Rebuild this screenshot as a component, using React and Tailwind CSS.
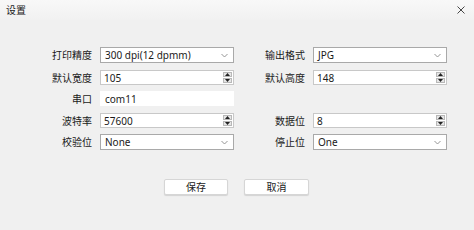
import React from "react";

// Settings dialog (打印设置)

function Chevron() {
  return (
    <svg width="7" height="5" viewBox="0 0 7 5" className="mr-[5px] shrink-0">
      <path d="M0.5 1 L3.5 4 L6.5 1" fill="none" stroke="#8a8a8a" strokeWidth="0.9" />
    </svg>
  );
}

function SelectBox({ value }) {
  return (
    <div className="flex h-full w-[134px] items-center justify-between border border-[#a9a9a9] bg-white pl-[4px]">
      <span>{value}</span>
      <Chevron />
    </div>
  );
}

function SpinBox({ value }) {
  return (
    <div className="flex h-full w-[134px] items-center justify-between border border-[#c8c8c8] bg-white pl-[3px]">
      <span>{value}</span>
      <div className="mr-[1px] flex h-full flex-col justify-center gap-[1px] py-[1px]">
        <div className="flex h-[6px] w-[9px] items-center justify-center border border-[#b8b8b8] bg-[#e6e6e6]">
          <svg width="5" height="3" viewBox="0 0 5 3">
            <path d="M0 3 L2.5 0 L5 3 Z" fill="#222" />
          </svg>
        </div>
        <div className="flex h-[6px] w-[9px] items-center justify-center border border-[#b8b8b8] bg-[#e6e6e6]">
          <svg width="5" height="3" viewBox="0 0 5 3">
            <path d="M0 0 L2.5 3 L5 0 Z" fill="#222" />
          </svg>
        </div>
      </div>
    </div>
  );
}

function TextBox({ value }) {
  return (
    <div className="flex h-full w-[134px] items-center border border-white bg-white pl-[4px]">
      {value}
    </div>
  );
}

function Row({ h, mt, left, right }) {
  return (
    <div className={`flex items-center ${mt} ${h}`}>
      <div className="w-[92px] text-right">{left[0]}</div>
      <div className="ml-[8px] h-full">{left[1]}</div>
      {right && (
        <>
          <div className="w-[71px] text-right">{right[0]}</div>
          <div className="ml-[8px] h-full">{right[1]}</div>
        </>
      )}
    </div>
  );
}

export default function App() {
  return (
    <div
      className="relative h-[230px] w-[474px] overflow-hidden bg-[#f0f0f0] text-[10px] leading-none text-[#1a1a1a]"
      style={{ fontFamily: '"Noto Sans", "Noto Sans CJK SC", sans-serif' }}
    >
      {/* title bar */}
      <div className="flex h-[20px] items-center justify-between bg-gradient-to-b from-[#f8f8f8] to-[#f1f1f1] px-[6px]">
        <span className="text-[10px]">设置</span>
        <svg width="8" height="8" viewBox="0 0 8 8" className="mr-[3px]">
          <path d="M0.5 0.5 L7.5 7.5 M7.5 0.5 L0.5 7.5" stroke="#333" strokeWidth="0.9" />
        </svg>
      </div>

      <div className="pt-[27px]">
        <Row
          h="h-[16px]"
          mt="mt-0"
          left={["打印精度", <SelectBox value="300 dpi(12 dpmm)" />]}
          right={["输出格式", <SelectBox value="JPG" />]}
        />
        <Row
          h="h-[15px]"
          mt="mt-[7px]"
          left={["默认宽度", <SpinBox value="105" />]}
          right={["默认高度", <SpinBox value="148" />]}
        />
        <Row h="h-[15px]" mt="mt-[6px]" left={["串口", <TextBox value="com11" />]} />
        <Row
          h="h-[15px]"
          mt="mt-[7px]"
          left={["波特率", <SpinBox value="57600" />]}
          right={["数据位", <SpinBox value="8" />]}
        />
        <Row
          h="h-[16px]"
          mt="mt-[6px]"
          left={["校验位", <SelectBox value="None" />]}
          right={["停止位", <SelectBox value="One" />]}
        />

        <div className="mt-[29px] flex h-[16px] pl-[164px]">
          <button className="flex h-full w-[64px] items-center justify-center rounded-[2px] border border-[#d6d6d6] bg-white shadow-[0_1px_1px_rgba(0,0,0,0.12)]">
            保存
          </button>
          <button className="ml-[16px] flex h-full w-[65px] items-center justify-center rounded-[2px] border border-[#d6d6d6] bg-white shadow-[0_1px_1px_rgba(0,0,0,0.12)]">
            取消
          </button>
        </div>
      </div>
    </div>
  );
}
